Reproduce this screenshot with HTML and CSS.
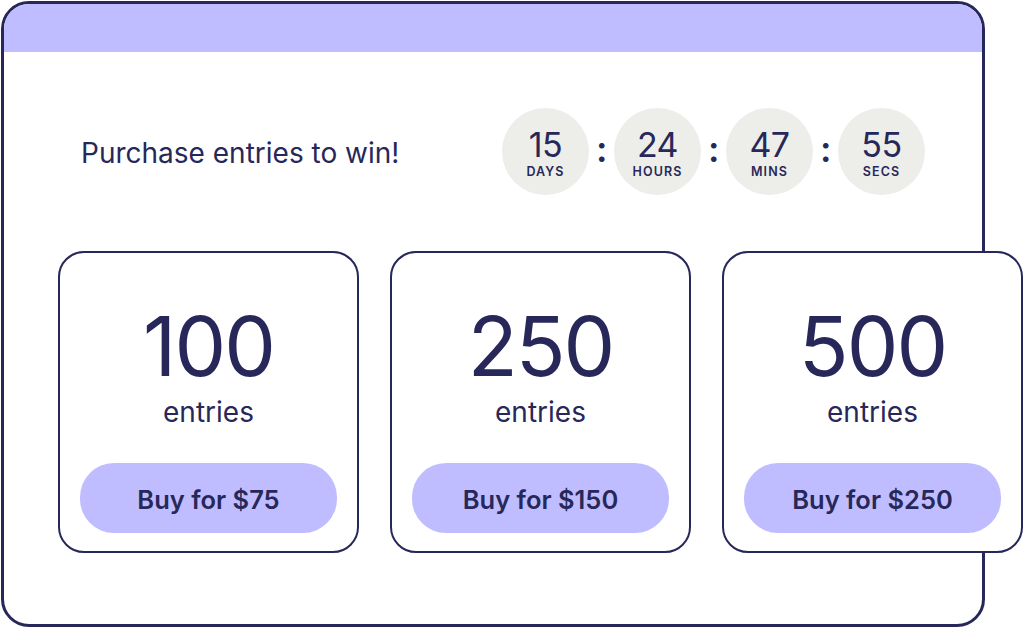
FILE: index.html
```html
<!doctype html>
<html lang="en">

<head>
    <meta charset="UTF-8">
    <title>Purchase entries</title>
    <link rel="stylesheet" href="styles.css">
</head>

<body>
    <div class="frame">
        <div class="frame-bar"></div>
        <div class="head">
            <h1 class="title">Purchase entries to win!</h1>
            <div class="countdown">
                <div class="unit"><b>15</b><span>DAYS</span></div>
                <i class="colon">:</i>
                <div class="unit"><b>24</b><span>HOURS</span></div>
                <i class="colon">:</i>
                <div class="unit"><b>47</b><span>MINS</span></div>
                <i class="colon">:</i>
                <div class="unit"><b>55</b><span>SECS</span></div>
            </div>
        </div>
        <div class="cards">
            <div class="card">
                <div class="num">100</div>
                <div class="label">entries</div>
                <a class="buy" href="#">Buy for $75</a>
            </div>
            <div class="card">
                <div class="num">250</div>
                <div class="label">entries</div>
                <a class="buy" href="#">Buy for $150</a>
            </div>
            <div class="card">
                <div class="num">500</div>
                <div class="label">entries</div>
                <a class="buy" href="#">Buy for $250</a>
            </div>
        </div>
    </div>
</body>

</html>
```

FILE: styles.css
```css
* {
    margin: 0;
    padding: 0;
    box-sizing: border-box;
}

body {
    background: #fff;
    font-family: Inter, "Liberation Sans", sans-serif;
    color: #272859;
}

.frame {
    width: 984px;
    height: 626px;
    margin: 1px 0 0 1px;
    border: 3px solid #272859;
    border-radius: 28px;
    background: #fff;
}

.frame-bar {
    height: 48px;
    background: #bfbdff;
    border-radius: 25px 25px 0 0;
}

.head {
    display: flex;
    align-items: center;
    justify-content: space-between;
    padding: 56px 57px 0 77px;
}

.title {
    font-size: 28px;
    font-weight: 400;
    margin-top: 2px;
}

.countdown {
    display: flex;
    align-items: center;
    gap: 7px;
}

.unit {
    width: 87px;
    height: 87px;
    border-radius: 50%;
    background: #edeeea;
    display: flex;
    flex-direction: column;
    align-items: center;
    justify-content: center;
    padding-top: 4px;
}

.unit b {
    font-size: 34px;
    font-weight: 400;
    line-height: 34px;
    letter-spacing: -0.5px;
}

.unit span {
    font-size: 12.5px;
    font-weight: 600;
    letter-spacing: 1.1px;
    margin-top: 2px;
}

.colon {
    font-style: normal;
    font-size: 36px;
    font-weight: 600;
    width: 11px;
    text-align: center;
    margin-top: -6px;
}

.cards {
    display: flex;
    gap: 31px;
    margin: 56px 0 0 54px;
}

.card {
    flex-shrink: 0;
    width: 301px;
    height: 302px;
    border: 2.5px solid #272859;
    border-radius: 26px;
    background: #fff;
    display: flex;
    flex-direction: column;
    align-items: center;
    padding: 0 20px 18px;
}

.num {
    font-size: 82px;
    line-height: 82px;
    letter-spacing: -2px;
    margin-top: 53px;
}

.label {
    font-size: 28px;
    line-height: 32px;
    margin-top: 8px;
}

.buy {
    margin-top: auto;
    width: 100%;
    height: 70px;
    border-radius: 34px;
    background: #bfbdff;
    color: #272859;
    text-decoration: none;
    font-size: 25.5px;
    font-weight: 600;
    display: flex;
    align-items: center;
    justify-content: center;
    padding-top: 2px;
}
```
